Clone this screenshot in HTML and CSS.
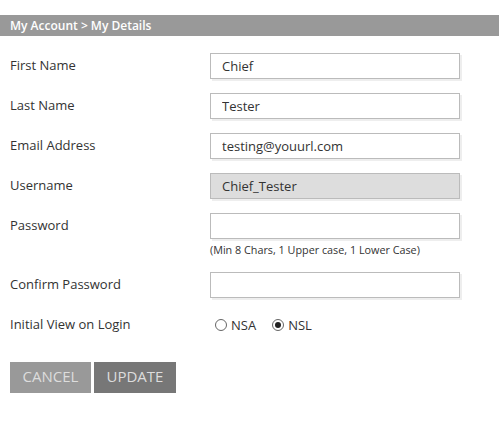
FILE: index.html
```html
<!DOCTYPE html>
<html lang="en">
<head>
    <meta charset="UTF-8">
    <title>My Details</title>
    <link rel="stylesheet" href="styles.css">
</head>
<body>

    <div class="crumb">My Account &gt; My Details</div>

    <form class="details">
        <div class="row">
            <label for="first">First Name</label>
            <input id="first" type="text" value="Chief">
        </div>
        <div class="row">
            <label for="last">Last Name</label>
            <input id="last" type="text" value="Tester">
        </div>
        <div class="row">
            <label for="email">Email Address</label>
            <input id="email" type="text" value="testing@youurl.com">
        </div>
        <div class="row">
            <label for="user">Username</label>
            <input id="user" type="text" value="Chief_Tester" class="locked" readonly>
        </div>
        <div class="row">
            <label for="pass">Password</label>
            <div class="field">
                <input id="pass" type="password">
                <p class="hint">(Min 8 Chars, 1 Upper case, 1 Lower Case)</p>
            </div>
        </div>
        <div class="row">
            <label for="confirm">Confirm Password</label>
            <input id="confirm" type="password">
        </div>
        <div class="row">
            <label>Initial View on Login</label>
            <div class="choices">
                <label class="choice"><span class="dot"></span>NSA</label>
                <label class="choice"><span class="dot on"></span>NSL</label>
            </div>
        </div>
        <div class="actions">
            <button type="button" class="cancel">CANCEL</button>
            <button type="button" class="update">UPDATE</button>
        </div>
    </form>

</body>
</html>
```

FILE: styles.css
```css
* {
    margin: 0;
    padding: 0;
    box-sizing: border-box;
    font-family: 'Open Sans', sans-serif;
}

body {
    background: #fff;
    color: #333;
}

.crumb {
    margin-top: 15px;
    height: 21px;
    line-height: 21px;
    padding-left: 10px;
    background: #999;
    color: #fff;
    font-size: 12px;
    font-weight: 600;
}

.details {
    padding: 17px 0 0 10px;
}

.row {
    display: grid;
    grid-template-columns: 200px 250px;
    align-items: start;
    margin-bottom: 14px;
}

.row > label {
    font-size: 13px;
    line-height: 24px;
}

input {
    width: 250px;
    height: 26px;
    border: 1px solid #bbb;
    box-shadow: 2px 2px 0 #eee;
    padding: 0 11px;
    font-size: 13px;
    color: #333;
    outline: none;
}

input.locked {
    background: #ddd;
}

.hint {
    font-size: 10.8px;
    margin-top: 3px;
    line-height: 16px;
}

.choices {
    display: flex;
    gap: 16px;
    padding-left: 5px;
    height: 26px;
    align-items: center;
}

.choice {
    display: flex;
    align-items: center;
    gap: 4px;
    font-size: 13px;
}

.dot {
    width: 12px;
    height: 12px;
    border: 1px solid #666;
    border-radius: 50%;
    position: relative;
}

.dot.on::after {
    content: "";
    position: absolute;
    left: 2px;
    top: 2px;
    width: 6px;
    height: 6px;
    border-radius: 50%;
    background: #222;
}

.actions {
    display: flex;
    gap: 3px;
    margin-top: 24px;
}

button {
    height: 31px;
    width: 81px;
    padding-bottom: 3px;
    border: none;
    color: #ddd;
    font-size: 15px;
}

.cancel {
    background: #999;
}

.update {
    background: #777;
    width: 82px;
}
```
